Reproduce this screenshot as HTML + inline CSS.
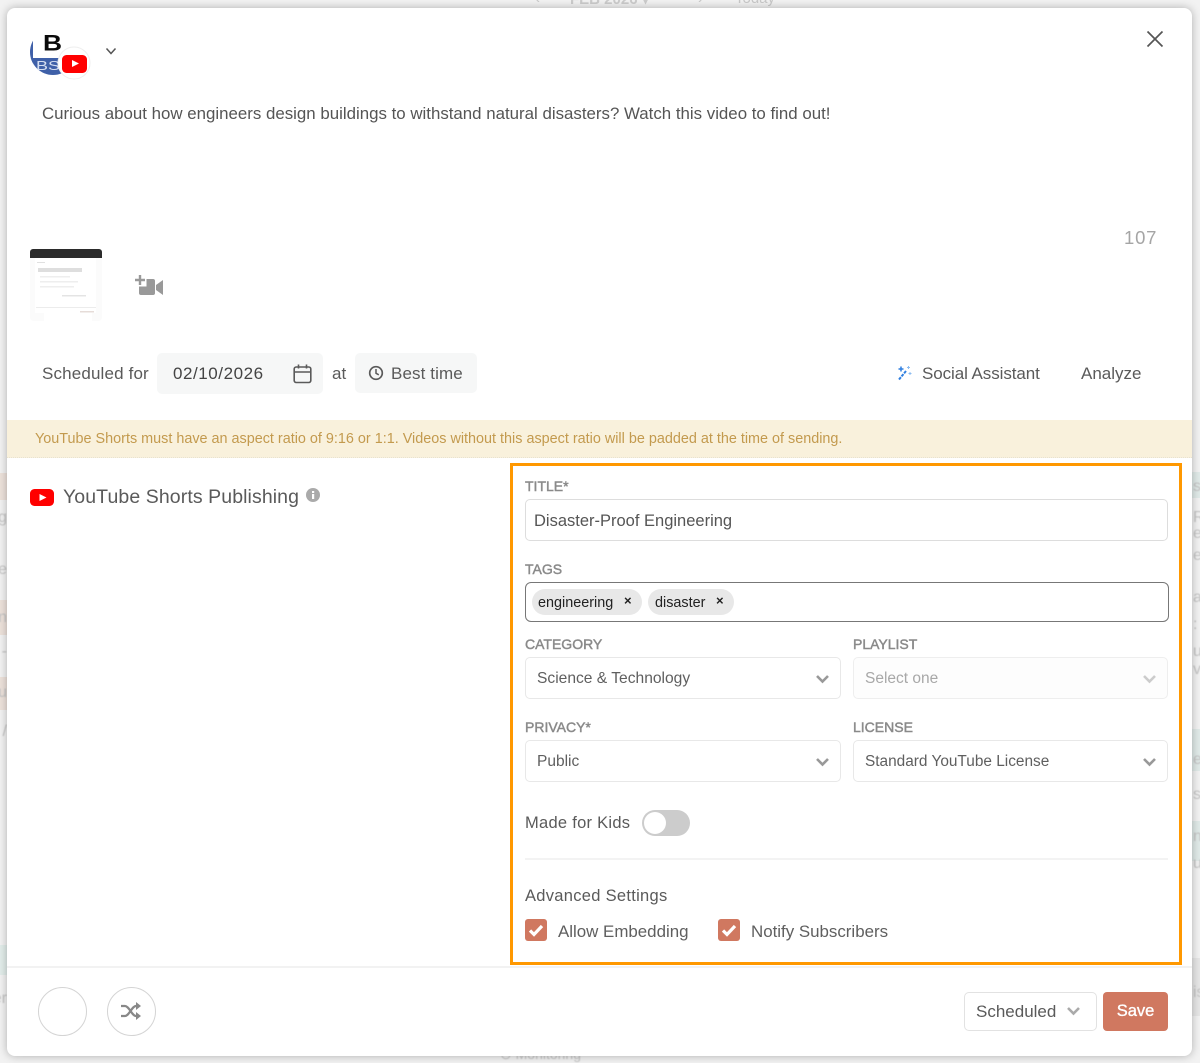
<!DOCTYPE html>
<html><head><meta charset="utf-8"><style>
html,body{margin:0;padding:0;width:1200px;height:1060px;overflow:hidden;background:#f2f2f2;font-family:"Liberation Sans",sans-serif;color:#555}
.a{position:absolute;white-space:nowrap}
.lbl{font-size:14px;font-weight:400;color:#8a8a8a;-webkit-text-stroke:.45px #8a8a8a;line-height:16px}
.fld{box-sizing:border-box;border:1px solid #e8e8e8;border-radius:5px;background:#fff;font-size:15.500px;color:#5f5f5f;padding-left:11px;line-height:42px;height:42px}
.bg{color:#c9c9c9;font-size:15px}
.f{position:absolute;white-space:nowrap;color:#c6c6c6;font-size:16px;line-height:18px;filter:blur(.6px)}
.l{right:1193px}.r{left:1193px}
</style></head><body>
<div class="a bg" style="left:570px;top:-10px;color:#ccc;font-weight:700">FEB 2026 ▾</div>
<div class="a bg" style="left:535px;top:-10px">‹</div>
<div class="a bg" style="left:698px;top:-10px">›</div>
<div class="a bg" style="left:735px;top:-10px">Today</div>
<div class="a" style="left:0;top:473px;width:7px;height:27px;background:#ede2db"></div>
<div class="a" style="left:0;top:600px;width:7px;height:35px;background:#ede2db"></div>
<div class="a" style="left:0;top:677px;width:7px;height:33px;background:#ede2db"></div>
<div class="a" style="left:0;top:945px;width:7px;height:30px;background:#e2edea"></div>
<div class="a" style="left:1192px;top:472px;width:8px;height:26px;background:#e0eae8"></div>
<div class="a" style="left:1192px;top:729px;width:8px;height:42px;background:#e0eae8"></div>
<div class="a" style="left:1192px;top:821px;width:8px;height:40px;background:#e0eae8"></div>
<div class="a" style="left:1192px;top:958px;width:8px;height:58px;background:#e6e6e6"></div>
<div class="f l" style="top:509px">ig</div><div class="f l" style="top:561px">e</div><div class="f l" style="top:609px">n</div><div class="f l" style="top:643px">-</div><div class="f l" style="top:684px">u</div><div class="f l" style="top:723px">/</div><div class="f l" style="top:990px">er</div>
<div class="f r" style="top:478px">s</div><div class="f r" style="top:509px">R</div><div class="f r" style="top:525px">en</div><div class="f r" style="top:547px">e</div><div class="f r" style="top:589px">ag</div><div class="f r" style="top:616px">:</div><div class="f r" style="top:643px">us</div><div class="f r" style="top:661px">v</div><div class="f r" style="top:751px">e</div><div class="f r" style="top:786px">s</div><div class="f r" style="top:828px">n</div><div class="f r" style="top:855px">ut</div><div class="f r" style="top:984px">is</div>
<div class="f" style="left:500px;top:1045px;font-size:14px">⊙ Monitoring</div>
<div class="a" style="left:7px;top:8px;width:1185px;height:1048px;background:#fff;border-radius:8px;box-shadow:0 0 9px rgba(0,0,0,.28)"></div>

<svg class="a" style="left:28px;top:28px" width="64" height="54" viewBox="0 0 64 54">
<defs><clipPath id="c"><circle cx="25" cy="24" r="23"/></clipPath></defs>
<g clip-path="url(#c)"><rect width="64" height="54" fill="#fff"/><rect x="0" y="0" width="5" height="54" fill="#3f60a8"/><rect y="30" width="64" height="24" fill="#3f60a8"/></g>
<text x="15" y="22.500" font-family="Liberation Sans" font-weight="700" font-size="22" fill="#0a0a0a" textLength="19" lengthAdjust="spacingAndGlyphs">B</text>
<text x="8" y="42" font-family="Liberation Sans" font-size="12.500" fill="#d5def0" textLength="24" lengthAdjust="spacingAndGlyphs">BS</text>
<circle cx="46" cy="35" r="16" fill="#fff" stroke="#eee"/>
<rect x="34" y="27" width="25" height="18" rx="4.500" fill="#f00"/><path d="M44 32l7 3.500-7 3.500z" fill="#fff"/>
</svg>
<svg class="a" style="left:105px;top:47px" width="12" height="9" viewBox="0 0 12 9"><path d="M1.500 1.500l4.500 5 4.500-5" fill="none" stroke="#555" stroke-width="1.500"/></svg>
<svg class="a" style="left:1146px;top:30px" width="18" height="18" viewBox="0 0 18 18"><path d="M1.500 1.500l15 15M16.500 1.500l-15 15" stroke="#555" stroke-width="1.700"/></svg>

<div class="a" style="left:42px;top:104px;font-size:16.860px;line-height:19px;color:#555">Curious about how engineers design buildings to withstand natural disasters? Watch this video to find out!</div>
<div class="a" style="left:1124px;top:227px;font-size:18.500px;line-height:21px;color:#a5a5a5;letter-spacing:.8px">107</div>

<svg class="a" style="left:30px;top:249px" width="72" height="72" viewBox="0 0 72 72">
<rect y="0" width="72" height="72" rx="4" fill="#fbfbfb"/><rect x="14" y="58" width="48" height="14" fill="#fff"/><rect x="5" y="8" width="61" height="56" fill="#fff"/>
<path d="M0 9V3a3 3 0 0 1 3-3h66a3 3 0 0 1 3 3v6z" fill="#2b2b2b"/>
<rect x="7" y="13" width="8" height="1" fill="#e0e0e0"/><rect x="8" y="19" width="44" height="4" fill="#dedede"/><rect x="10" y="27" width="30" height="1.500" fill="#eee"/><rect x="10" y="32" width="38" height="1.500" fill="#eee"/><rect x="10" y="37" width="34" height="1.500" fill="#eee"/><rect x="32" y="46" width="24" height="1.500" fill="#e4e4e4"/><rect x="6" y="58" width="60" height="1" fill="#ececec"/><rect x="50" y="62" width="14" height="1.500" fill="#e6dcd8"/>
</svg>
<svg class="a" style="left:134px;top:274px" width="30" height="22" viewBox="0 0 30 22">
<path d="M6 1v10M1 6h10" stroke="#999" stroke-width="2.400"/>
<path d="M12.500 5H19a2 2 0 0 1 2 2v12a2 2 0 0 1-2 2H7a2 2 0 0 1-2-2v-6.500h7.500zM22 11l7-5v15l-7-5z" fill="#999"/>
</svg>

<div class="a" style="left:42px;top:364px;font-size:17px;line-height:20px;color:#5a5a5a;letter-spacing:.15px">Scheduled for</div>
<div class="a" style="left:157px;top:353px;width:166px;height:41px;background:#f6f7f7;border-radius:5px"></div>
<div class="a" style="left:173px;top:364px;font-size:17px;line-height:20px;color:#444;letter-spacing:.55px">02/10/2026</div>
<svg class="a" style="left:293px;top:364px" width="19" height="20" viewBox="0 0 19 20"><rect x="1.200" y="3" width="16.600" height="15.500" rx="2" fill="none" stroke="#5a5a5a" stroke-width="1.600"/><path d="M1 8h17M5.500 .5v4M13.500 .5v4" stroke="#5a5a5a" stroke-width="1.600" fill="none"/></svg>
<div class="a" style="left:332px;top:364px;font-size:17px;line-height:20px;color:#5a5a5a">at</div>
<div class="a" style="left:355px;top:353px;width:122px;height:40px;background:#f6f7f7;border-radius:5px"></div>
<svg class="a" style="left:368px;top:365px" width="16" height="16" viewBox="0 0 16 16"><circle cx="8" cy="8" r="6.300" fill="none" stroke="#5a5a5a" stroke-width="1.700"/><path d="M8 4v4.300l2.800 1.500" fill="none" stroke="#5a5a5a" stroke-width="1.500"/></svg>
<div class="a" style="left:391px;top:364px;font-size:17px;line-height:20px;color:#5a5a5a;letter-spacing:.1px">Best time</div>

<svg class="a" style="left:897px;top:365px" width="16" height="16" viewBox="0 0 16 16"><path d="M2 14.500L9 6" stroke="#2f7fe0" stroke-width="2" stroke-dasharray="3 1"/><path d="M4 1.500v5M1.500 4h5" stroke="#2f7fe0" stroke-width="1.500"/><path d="M11.500 1v3M10 2.500h3M13 7v3M11.500 8.500h3" stroke="#8dbcf0" stroke-width="1"/></svg>
<div class="a" style="left:922px;top:364px;font-size:17px;line-height:20px;color:#5a5a5a;letter-spacing:-.08px">Social Assistant</div>
<div class="a" style="left:1081px;top:364px;font-size:17px;line-height:20px;color:#5a5a5a;letter-spacing:0">Analyze</div>

<div class="a" style="left:7px;top:420px;width:1185px;height:37px;background:#f9f1dc;border-bottom:1px dotted #e8e2d0"></div>
<div class="a" style="left:35px;top:431px;font-size:14.400px;line-height:17px;color:#c39a4e">YouTube Shorts must have an aspect ratio of 9:16 or 1:1. Videos without this aspect ratio will be padded at the time of sending.</div>

<svg class="a" style="left:30px;top:489px" width="24" height="17" viewBox="0 0 24 17"><rect width="24" height="17" rx="4.500" fill="#f00"/><path d="M9.500 5l7 3.500-7 3.500z" fill="#fff"/></svg>
<div class="a" style="left:63px;top:486px;font-size:19.500px;line-height:23px;color:#5a5a5a;letter-spacing:.09px">YouTube Shorts Publishing</div>
<svg class="a" style="left:306px;top:488px" width="14" height="14" viewBox="0 0 14 14"><circle cx="7" cy="7" r="7" fill="#aaa"/><rect x="6" y="6" width="2.200" height="5" fill="#fff"/><rect x="6" y="3" width="2.200" height="2" fill="#fff"/></svg>

<div class="a" style="left:510px;top:463px;width:666px;height:496px;border:3px solid #ff9800"></div>

<div class="a lbl" style="left:525px;top:478px">TITLE*</div>
<div class="a fld" style="left:525px;top:499px;width:643px;padding-left:8px;border-color:#ddd;color:#555;font-size:16.500px">Disaster-Proof Engineering</div>

<div class="a lbl" style="left:525px;top:561px">TAGS</div>
<div class="a" style="left:525px;top:582px;width:642px;height:38px;border:1px solid #777;border-radius:6px"></div>
<div class="a" style="left:532px;top:589px;width:110px;height:26px;border-radius:13px;background:#e8e8e8"></div>
<div class="a" style="left:538px;top:595px;font-size:14.400px;line-height:17px;color:#222">engineering</div>
<div class="a" style="left:624px;top:592px;font-size:13px;line-height:17px;color:#222;font-weight:700">×</div>
<div class="a" style="left:648px;top:589px;width:86px;height:26px;border-radius:13px;background:#e8e8e8"></div>
<div class="a" style="left:655px;top:595px;font-size:14.400px;line-height:17px;color:#222">disaster</div>
<div class="a" style="left:716px;top:592px;font-size:13px;line-height:17px;color:#222;font-weight:700">×</div>

<div class="a lbl" style="left:525px;top:636px">CATEGORY</div>
<div class="a fld" style="left:525px;top:657px;width:316px;font-size:15.600px">Science &amp; Technology</div>
<svg class="a" style="left:815px;top:674px" width="15" height="10" viewBox="0 0 15 10"><path d="M2 2l5.500 5.500L13 2" fill="none" stroke="#999" stroke-width="2.600"/></svg>

<div class="a lbl" style="left:853px;top:636px">PLAYLIST</div>
<div class="a fld" style="left:853px;top:657px;width:315px;color:#a8a8a8;background:#fdfdfd;border-color:#eee">Select one</div>
<svg class="a" style="left:1142px;top:674px" width="15" height="10" viewBox="0 0 15 10"><path d="M2 2l5.500 5.500L13 2" fill="none" stroke="#ccc" stroke-width="2.600"/></svg>

<div class="a lbl" style="left:525px;top:719px">PRIVACY*</div>
<div class="a fld" style="left:525px;top:740px;width:316px">Public</div>
<svg class="a" style="left:815px;top:757px" width="15" height="10" viewBox="0 0 15 10"><path d="M2 2l5.500 5.500L13 2" fill="none" stroke="#999" stroke-width="2.600"/></svg>

<div class="a lbl" style="left:853px;top:719px">LICENSE</div>
<div class="a fld" style="left:853px;top:740px;width:315px;font-size:15.400px">Standard YouTube License</div>
<svg class="a" style="left:1142px;top:757px" width="15" height="10" viewBox="0 0 15 10"><path d="M2 2l5.500 5.500L13 2" fill="none" stroke="#999" stroke-width="2.600"/></svg>

<div class="a" style="left:525px;top:813px;font-size:16.500px;line-height:20px;color:#5a5a5a;letter-spacing:.27px">Made for Kids</div>
<div class="a" style="left:642px;top:810px;width:48px;height:26px;border-radius:13px;background:#ccc"></div>
<div class="a" style="left:644px;top:812px;width:22px;height:22px;border-radius:50%;background:#fff"></div>
<div class="a" style="left:525px;top:858px;width:643px;height:2px;background:#f3f3f3"></div>
<div class="a" style="left:525px;top:886px;font-size:16.500px;line-height:20px;color:#5a5a5a;letter-spacing:.29px">Advanced Settings</div>

<svg class="a" style="left:525px;top:919px" width="22" height="22" viewBox="0 0 22 22"><rect width="22" height="22" rx="3" fill="#d07860"/><path d="M5 11.500l4 4 8-8.500" fill="none" stroke="#fff" stroke-width="3.200"/></svg>
<div class="a" style="left:558px;top:922px;font-size:16.900px;line-height:20px;color:#5f5f5f">Allow Embedding</div>
<svg class="a" style="left:718px;top:919px" width="22" height="22" viewBox="0 0 22 22"><rect width="22" height="22" rx="3" fill="#d07860"/><path d="M5 11.500l4 4 8-8.500" fill="none" stroke="#fff" stroke-width="3.200"/></svg>
<div class="a" style="left:751px;top:922px;font-size:16.900px;line-height:20px;color:#5f5f5f">Notify Subscribers</div>

<div class="a" style="left:7px;top:966px;width:1185px;height:2px;background:#f2f2f2"></div>
<div class="a" style="left:38px;top:987px;width:47px;height:47px;border:1px solid #d4d4d4;border-radius:50%"></div>
<div class="a" style="left:107px;top:987px;width:47px;height:47px;border:1px solid #d4d4d4;border-radius:50%"></div>
<svg class="a" style="left:121px;top:1002px" width="20" height="18" viewBox="0 0 20 18"><path d="M0 4h4c4 0 7 10 11 10h2M0 14h4c4 0 7-10 11-10h2" fill="none" stroke="#888" stroke-width="2.200"/><path d="M15 0l5 4-5 4zM15 10l5 4-5 4z" fill="#888"/></svg>

<div class="fld a" style="left:964px;top:992px;width:133px;height:39px;line-height:38px;border-color:#e2e2e2;font-size:17px;letter-spacing:0;padding-left:11px;color:#5a5a5a">Scheduled</div>
<svg class="a" style="left:1066px;top:1006px" width="15" height="10" viewBox="0 0 15 10"><path d="M2 2l5.500 5.500L13 2" fill="none" stroke="#aaa" stroke-width="2.600"/></svg>
<div class="a" style="left:1103px;top:992px;width:65px;height:39px;background:#d07860;border-radius:4px;color:#fff;font-size:16.500px;-webkit-text-stroke:.35px #fff;line-height:39px;text-align:center">Save</div>
</body></html>
